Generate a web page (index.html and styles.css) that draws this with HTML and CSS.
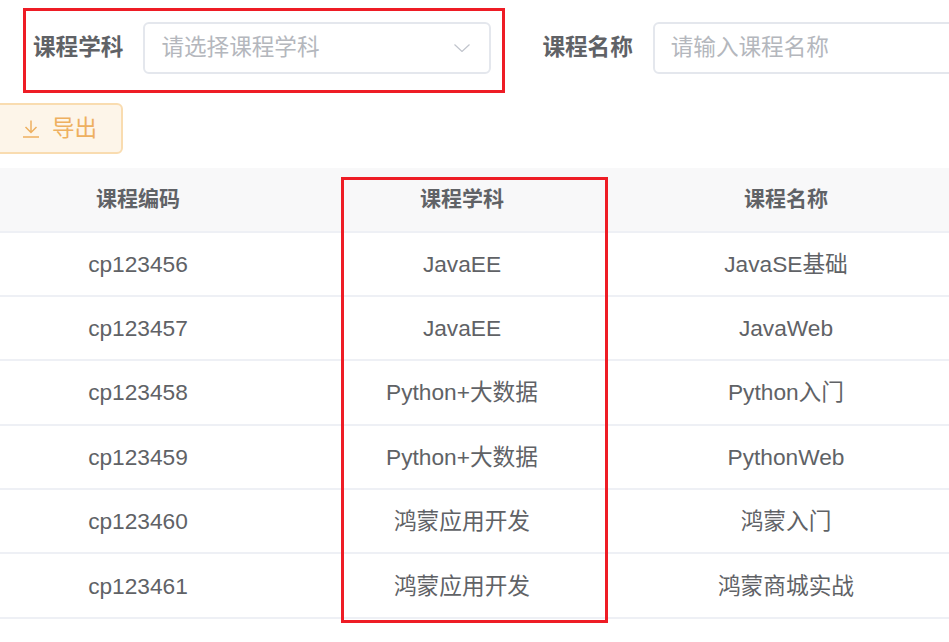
FILE: index.html
```html
<!DOCTYPE html>
<html lang="zh">
<head>
<meta charset="utf-8">
<title>课程管理</title>
<link rel="stylesheet" href="styles.css">
</head>
<body>
<div class="page">
  <div class="filters">
    <div class="field field-first">
      <span class="label">课程学科</span>
      <div class="control control-select">
        <span class="placeholder">请选择课程学科</span>
        <svg class="chevron" viewBox="0 0 16 8" aria-hidden="true"><path d="M0.500 0.500L8 7.500 15.500 0.500"/></svg>
      </div>
    </div>
    <div class="field">
      <span class="label">课程名称</span>
      <div class="control control-input"><span class="placeholder">请输入课程名称</span></div>
    </div>
  </div>
  <div class="actions">
    <button class="btn-export" type="button">
      <svg class="export-icon" viewBox="0 0 16 18" aria-hidden="true"><path d="M8 0.500V12.500M2.500 7L8 12.500 13.500 7M0 17h16"/></svg>
      <span>导出</span>
    </button>
  </div>
  <div class="table">
    <div class="row row-head"><div class="cell">课程编码</div><div class="cell">课程学科</div><div class="cell">课程名称</div></div>
    <div class="row"><div class="cell">cp123456</div><div class="cell">JavaEE</div><div class="cell">JavaSE基础</div></div>
    <div class="row"><div class="cell">cp123457</div><div class="cell">JavaEE</div><div class="cell">JavaWeb</div></div>
    <div class="row"><div class="cell">cp123458</div><div class="cell">Python+大数据</div><div class="cell">Python入门</div></div>
    <div class="row"><div class="cell">cp123459</div><div class="cell">Python+大数据</div><div class="cell">PythonWeb</div></div>
    <div class="row"><div class="cell">cp123460</div><div class="cell">鸿蒙应用开发</div><div class="cell">鸿蒙入门</div></div>
    <div class="row"><div class="cell">cp123461</div><div class="cell">鸿蒙应用开发</div><div class="cell">鸿蒙商城实战</div></div>
  </div>
  <div class="mark mark-filter"></div>
  <div class="mark mark-column"></div>
</div>
</body>
</html>
```
FILE: styles.css
```css
* { box-sizing: border-box; }
html, body { margin: 0; height: 100%; background: #fff; }
body { overflow: hidden; font-family: "Liberation Sans", "Noto Sans CJK SC", sans-serif; color: #606266; }
.page { position: relative; width: 949px; height: 642px; overflow: hidden; }

.filters { display: flex; gap: 51px; padding: 22px 0 0 33px; height: 103px; }
.field { display: flex; align-items: flex-start; gap: 20px; }
.label { font-size: 22.600px; font-weight: 700; line-height: 52px; color: #606266; white-space: nowrap; }
.control { display: flex; align-items: center; height: 52px; border: 2px solid #e4e7ed; border-radius: 6px; padding: 0 16px; background: #fff; }
.control-select { width: 348px; justify-content: space-between; }
.control-input { width: 348px; }
.placeholder { font-size: 22.600px; line-height: 30px; color: #b4b7bd; white-space: nowrap; }
.chevron { width: 16px; height: 8px; margin-right: 3px; fill: none; stroke: #c0c4cc; stroke-width: 1.200; }

.actions { height: 65px; margin-left: -20px; }
.btn-export { display: flex; align-items: center; gap: 13px; width: 143px; height: 51px; padding: 0 0 0 41px; border: 2px solid #f9dcb0; border-radius: 6px; background: #fdf5e9; color: #eeb060; font: inherit; font-size: 22.600px; line-height: 30px; }
.export-icon { width: 16px; height: 18px; fill: none; stroke: #eeb060; stroke-width: 1.500; }

.table { margin-left: -24px; width: 1000px; }
.row { display: grid; grid-template-columns: repeat(3, 324px); height: 64.400px; border-bottom: 2px solid #eef0f5; align-items: center; font-size: 22.700px; line-height: 30px; color: #606266; }
.row-head { background: #f8f8f9; font-weight: 700; font-size: 21px; height: 64.500px; }
.cell { text-align: center; white-space: nowrap; }

.mark { position: absolute; border: 3px solid #ee1c25; pointer-events: none; }
.mark-filter { left: 23px; top: 8px; width: 482px; height: 85px; }
.mark-column { left: 341px; top: 177px; width: 267px; height: 446px; }
```
